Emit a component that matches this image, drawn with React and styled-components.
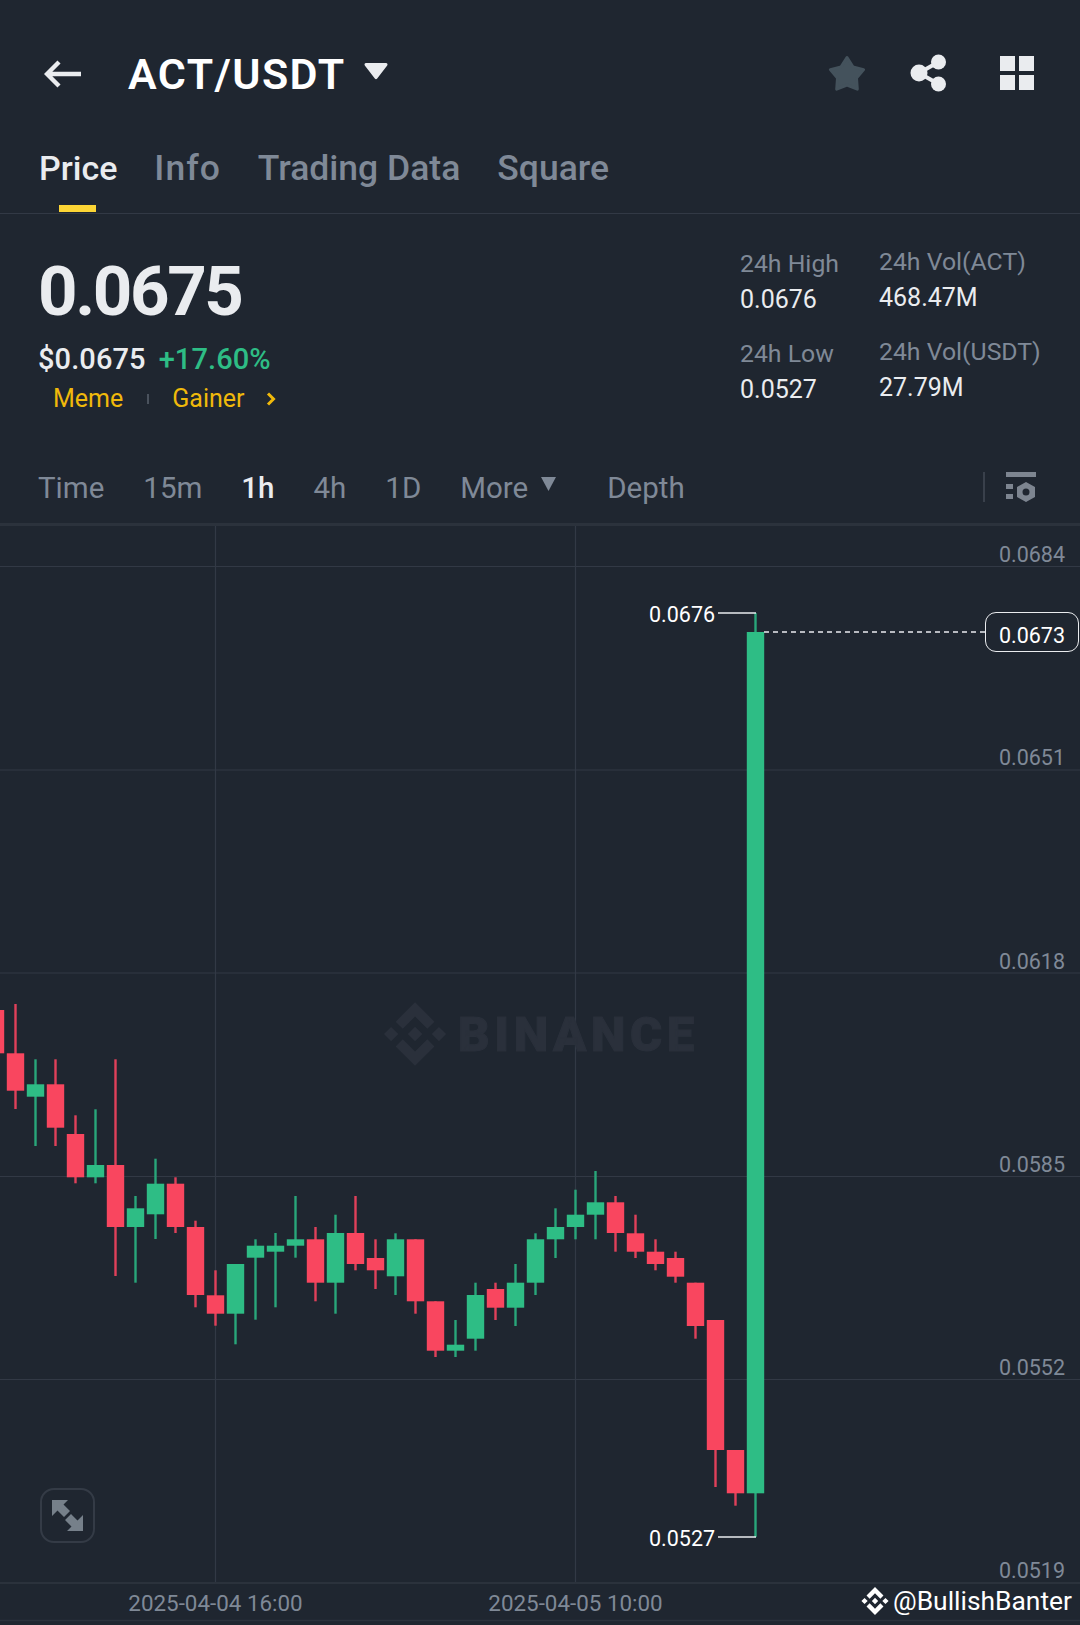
import styled, { createGlobalStyle } from 'styled-components';

const GlobalStyle = createGlobalStyle`
  html, body {
    margin: 0;
    padding: 0;
    background: #1f2630;
  }
  * {
    box-sizing: border-box;
  }
`;

const FONT = `Roboto, "Noto Sans", sans-serif`;
const GREY = '#7f8997';
const WHITE = '#eaecef';
const GREEN = '#2ebd85';
const RED = '#f9465f';
const GRID = '#323945';

const Page = styled.div`
  width: 1080px;
  height: 1625px;
  overflow: hidden;
  display: flex;
  flex-direction: column;
  background: #1f2630;
  color: ${WHITE};
  font-family: ${FONT};
`;

const TopBar = styled.header`
  height: 132px;
  padding: 16px 46px 0 44px;
  display: flex;
  align-items: center;
`;

const Title = styled.h1`
  margin: 0 0 0 47px;
  font-size: 43px;
  font-weight: 600;
  letter-spacing: 1.4px;
  color: #fff;
`;

const Caret = styled.svg`
  margin: 0 0 6px 18px;
  flex: none;
`;

const Actions = styled.div`
  margin: 0 0 2px auto;
  display: flex;
  align-items: center;
  gap: 44px;
`;

const ShareIcon = styled.svg`
  margin-right: 8px;
`;

const Tabs = styled.nav`
  height: 82px;
  padding: 0 0 10px 39px;
  display: flex;
  align-items: center;
  gap: 37px;
  border-bottom: 1px solid ${GRID};
`;

const Tab = styled.div`
  position: relative;
  font-size: ${(props) => (props.$active ? 34 : 35.5)}px;
  font-weight: 500;
  letter-spacing: ${(props) => props.$spread || 0}px;
  color: ${(props) => (props.$active ? WHITE : GREY)};

  &::after {
    content: '';
    display: ${(props) => (props.$active ? 'block' : 'none')};
    position: absolute;
    left: 20px;
    bottom: -24px;
    width: 37px;
    height: 7px;
    background: #fcd535;
  }
`;

const Summary = styled.section`
  height: 244px;
  display: flex;
  justify-content: space-between;
`;

const PriceBlock = styled.div`
  padding: 38px 0 0 38px;
`;

const BigPrice = styled.div`
  font-size: 69px;
  line-height: 80px;
  font-weight: 700;
  letter-spacing: -2.4px;
`;

const SubPrice = styled.div`
  margin-top: 10px;
  display: flex;
  gap: 13px;
  font-size: 29px;
  line-height: 34px;
  font-weight: 500;
  letter-spacing: 0.1px;
`;

const Change = styled.span`
  color: ${GREEN};
`;

const TagRow = styled.div`
  margin: 6px 0 0 15px;
  display: flex;
  align-items: center;
  font-size: 25px;
  line-height: 34px;
  color: #f0b90b;
`;

const TagDivider = styled.i`
  width: 2px;
  height: 10px;
  margin: 0 23px 0 24px;
  background: #4a525d;
`;

const TagArrow = styled.svg`
  margin-left: 21px;
`;

const Stats = styled.div`
  display: flex;
  width: 340px;
`;

const StatColumn = styled.div`
  width: ${(props) => props.$width}px;
  padding-top: ${(props) => props.$top}px;
  display: flex;
  flex-direction: column;
  gap: 23px;
`;

const Stat = styled.div`
  display: flex;
  flex-direction: column;
  gap: 5px;
`;

const StatLabel = styled.span`
  font-size: 24.8px;
  line-height: 31px;
  color: ${GREY};
`;

const StatValue = styled.span`
  font-size: 25px;
  line-height: 31px;
  color: ${WHITE};
`;

const IntervalBar = styled.div`
  height: 68px;
  padding: 0 44px 6px 38px;
  display: flex;
  align-items: center;
  gap: 39px;
  font-size: 29.5px;
  color: ${GREY};
  border-bottom: 3px solid #2b323c;
`;

const Interval = styled.span`
  color: ${(props) => (props.$active ? WHITE : GREY)};
  font-weight: ${(props) => (props.$active ? 500 : 400)};
`;

const MoreCaret = styled.svg`
  margin: 0 11px 8px -27px;
`;

const BarSide = styled.div`
  margin: 0 0 2px auto;
  display: flex;
  align-items: center;
  gap: 21px;
`;

const BarDivider = styled.i`
  width: 2px;
  height: 30px;
  background: #39404b;
`;

const ChartWrap = styled.main`
  position: relative;
  flex: 1;
`;

const ChartSvg = styled.svg`
  display: block;
  width: 1080px;
  height: 1099px;
`;

const AxisText = styled.text`
  font-family: ${FONT};
  font-size: ${(props) => props.$size || 21.5}px;
  fill: ${(props) => props.$fill || GREY};
`;

const Watermark = styled.text`
  font-family: ${FONT};
  font-size: 49px;
  font-weight: 900;
  letter-spacing: 4.6px;
  fill: #2a303b;
  stroke: #2a303b;
  stroke-width: 1px;
`;

const PriceTag = styled.div`
  position: absolute;
  left: 985px;
  top: 86px;
  width: 94px;
  height: 40px;
  padding-top: 6px;
  display: flex;
  align-items: center;
  justify-content: center;
  font-size: 21.5px;
  color: #fff;
  background: #1f2630;
  border: 1.5px solid ${WHITE};
  border-radius: 11px;
`;

const ExpandButton = styled.div`
  position: absolute;
  left: 40px;
  top: 962px;
  width: 55px;
  height: 55px;
  display: flex;
  align-items: center;
  justify-content: center;
  border: 2px solid #343b46;
  border-radius: 14px;
`;

const Credit = styled.div`
  position: absolute;
  right: 8px;
  top: 1060px;
  display: flex;
  align-items: center;
  gap: 4px;
  font-size: 26.4px;
  line-height: 30px;
  color: #fff;
`;

const BINANCE_LOGO =
  'M38.73 53.2L64 27.93l25.28 25.28 14.7-14.7L64-1.47 24.03 38.5zM0 64l14.7-14.7L29.4 64 14.7 78.7zm38.73 10.8L64 100.07l25.28-25.28 14.71 14.69L64 129.47 24.03 89.5l-.02-.02zM98.6 64l14.7-14.7L128 64l-14.7 14.7zM78.91 64L64 49.09 52.99 60.1l-1.27 1.27-2.61 2.61L64 78.91 78.91 64z';

// x, high, body top, body bottom, low, up
const CANDLES = [
  [-4.5, 1000, 1010, 1053.3, 1060, 0],
  [15.5, 1004, 1053.3, 1090.7, 1109, 0],
  [35.5, 1059.3, 1084.3, 1096.7, 1146, 1],
  [55.5, 1059.3, 1084.3, 1127.7, 1146, 0],
  [75.5, 1115.3, 1134, 1177.3, 1183.3, 0],
  [95.5, 1109.3, 1165, 1177.3, 1183.3, 1],
  [115.5, 1059.3, 1165, 1227, 1276, 0],
  [135.5, 1196, 1208.3, 1227, 1282.7, 1],
  [155.5, 1158.7, 1183.7, 1214.3, 1239, 1],
  [175.5, 1177.3, 1183.7, 1227, 1233, 0],
  [195.5, 1220.7, 1227, 1295, 1307.3, 0],
  [215.5, 1270.3, 1295.3, 1313.7, 1325.7, 0],
  [235.5, 1264, 1264, 1313.7, 1344.3, 1],
  [255.5, 1239.3, 1245.7, 1257.7, 1319.7, 1],
  [275.5, 1233, 1245.7, 1251.7, 1307.3, 1],
  [295.5, 1196, 1239.3, 1245.7, 1257.7, 1],
  [315.5, 1227, 1239.3, 1282.7, 1301.3, 0],
  [335.5, 1214.7, 1233, 1282.7, 1313.7, 1],
  [355.5, 1196, 1233, 1264, 1270.3, 0],
  [375.5, 1239.3, 1258, 1270.3, 1289, 0],
  [395.5, 1233.3, 1239.3, 1276.3, 1295, 1],
  [415.5, 1239.3, 1239.3, 1301.3, 1313.7, 0],
  [435.5, 1301.3, 1301.3, 1350.7, 1357, 0],
  [455.5, 1320, 1344.7, 1350.7, 1357, 1],
  [475.5, 1282.7, 1295, 1338.7, 1350.7, 1],
  [495.5, 1282.7, 1289, 1307.7, 1320, 0],
  [515.5, 1264, 1282.7, 1307.7, 1326, 1],
  [535.5, 1233.3, 1239.3, 1282.7, 1295, 1],
  [555.5, 1208.3, 1227, 1239.3, 1258, 1],
  [575.5, 1189.7, 1214.7, 1227, 1239.3, 1],
  [595.5, 1171, 1202.3, 1214.7, 1239.3, 1],
  [615.5, 1196, 1202.3, 1233, 1251.7, 0],
  [635.5, 1214.7, 1233.3, 1251.7, 1258, 0],
  [655.5, 1239.3, 1251.7, 1264, 1270.3, 0],
  [675.5, 1251.7, 1258, 1276.7, 1282.7, 0],
  [695.5, 1282.7, 1282.7, 1326, 1338.7, 0],
  [715.5, 1320, 1320, 1450, 1487, 0],
  [735.5, 1450, 1450, 1493.3, 1505.7, 0],
  [755.5, 613, 632, 1493.3, 1537, 1],
];

const GRID_ROWS = [566.5, 770, 973, 1176.5, 1379.5];
const PRICE_LABELS = [
  ['0.0684', 562],
  ['0.0651', 765],
  ['0.0618', 969],
  ['0.0585', 1172],
  ['0.0552', 1375],
  ['0.0519', 1578],
];

function Candle({ candle }) {
  const [x, high, top, bottom, low, up] = candle;
  const fill = up ? GREEN : RED;
  const wick = up ? '#29a67a' : '#e0405a';
  return (
    <g>
      <rect x={x - 1.2} y={high} width={2.4} height={low - high} fill={wick} />
      <rect x={x - 8.7} y={top} width={17.4} height={bottom - top} fill={fill} />
    </g>
  );
}

function Chart() {
  return (
    <ChartSvg viewBox="0 526 1080 1099">
      {GRID_ROWS.map((y) => (
        <line key={y} x1="0" x2="1080" y1={y} y2={y} stroke={GRID} strokeWidth="1.2" />
      ))}
      <line x1="215.5" x2="215.5" y1="526" y2="1583" stroke={GRID} strokeWidth="1.2" />
      <line x1="575.5" x2="575.5" y1="526" y2="1583" stroke={GRID} strokeWidth="1.2" />
      <line x1="0" x2="1080" y1="1583" y2="1583" stroke="#2b323c" strokeWidth="2" />
      <line x1="0" x2="1080" y1="1620.5" y2="1620.5" stroke="#2b323c" strokeWidth="1.5" />

      <g fill="#2a303b" transform="translate(384 1003) scale(0.485)">
        <path d={BINANCE_LOGO} />
      </g>
      <Watermark x="458" y="1051">BINANCE</Watermark>

      {CANDLES.map((candle) => (
        <Candle key={candle[0]} candle={candle} />
      ))}

      {PRICE_LABELS.map(([label, y]) => (
        <AxisText key={label} x="1065" y={y} textAnchor="end">{label}</AxisText>
      ))}
      <AxisText x="215.5" y="1611" textAnchor="middle" $size={22.4}>2025-04-04 16:00</AxisText>
      <AxisText x="575.5" y="1611" textAnchor="middle" $size={22.4}>2025-04-05 10:00</AxisText>

      <AxisText x="649" y="622" $fill="#fff">0.0676</AxisText>
      <line x1="718" x2="756" y1="613" y2="613" stroke={WHITE} strokeWidth="1.4" />
      <AxisText x="649" y="1546" $fill="#fff">0.0527</AxisText>
      <line x1="718" x2="756" y1="1537" y2="1537" stroke={WHITE} strokeWidth="1.4" />
      <line x1="764" x2="986" y1="632" y2="632" stroke={WHITE} strokeWidth="1.4" strokeDasharray="5 4" />
    </ChartSvg>
  );
}

function App() {
  return (
    <Page>
      <GlobalStyle />
      <TopBar>
        <svg width="37" height="28" viewBox="0 0 37 28" fill="none" stroke={WHITE} strokeWidth="4.4">
          <path d="M37 14H3M15 2L3 14l12 12" />
        </svg>
        <Title>ACT/USDT</Title>
        <Caret width="24" height="18" viewBox="0 0 24 18">
          <path d="M2 1h20a1.5 1.5 0 0 1 1.2 2.4l-10 13a1.5 1.5 0 0 1-2.4 0L.8 3.4A1.5 1.5 0 0 1 2 1z" fill={WHITE} />
        </Caret>
        <Actions>
          <svg width="38" height="38" viewBox="0 0 37 38">
            <path
              d="M18.5 3.5l5.9 9.4 10.7 2.7-7.1 8.5.8 11.1-10.3-4.2-10.3 4.2.8-11.1-7.1-8.5 10.7-2.7z"
              fill="#44525c"
              stroke="#44525c"
              strokeWidth="3"
              strokeLinejoin="round"
            />
          </svg>
          <ShareIcon width="38" height="38" viewBox="0 0 38 38" fill={WHITE}>
            <circle cx="9" cy="19" r="8.5" />
            <circle cx="28.5" cy="8" r="7.5" />
            <circle cx="28.5" cy="30" r="7.5" />
            <path d="M9 19L28.5 8M9 19l19.5 11" stroke={WHITE} strokeWidth="4" />
          </ShareIcon>
          <svg width="34" height="34" viewBox="0 0 34 34" fill={WHITE}>
            <rect x="0" y="0" width="15" height="15" />
            <rect x="19" y="0" width="15" height="15" />
            <rect x="0" y="19" width="15" height="15" />
            <rect x="19" y="19" width="15" height="15" />
          </svg>
        </Actions>
      </TopBar>

      <Tabs>
        <Tab $active>Price</Tab>
        <Tab $spread={1}>Info</Tab>
        <Tab>Trading Data</Tab>
        <Tab>Square</Tab>
      </Tabs>

      <Summary>
        <PriceBlock>
          <BigPrice>0.0675</BigPrice>
          <SubPrice>
            <span>$0.0675</span>
            <Change>+17.60%</Change>
          </SubPrice>
          <TagRow>
            <span>Meme</span>
            <TagDivider />
            <span>Gainer</span>
            <TagArrow width="10" height="14" viewBox="0 0 10 14" fill="none" stroke="#f0b90b" strokeWidth="3">
              <path d="M2 1.5L7.5 7 2 12.5" />
            </TagArrow>
          </TagRow>
        </PriceBlock>
        <Stats>
          <StatColumn $width={139} $top={34}>
            <Stat>
              <StatLabel>24h High</StatLabel>
              <StatValue>0.0676</StatValue>
            </Stat>
            <Stat>
              <StatLabel>24h Low</StatLabel>
              <StatValue>0.0527</StatValue>
            </Stat>
          </StatColumn>
          <StatColumn $width={201} $top={32}>
            <Stat>
              <StatLabel>24h Vol(ACT)</StatLabel>
              <StatValue>468.47M</StatValue>
            </Stat>
            <Stat>
              <StatLabel>24h Vol(USDT)</StatLabel>
              <StatValue>27.79M</StatValue>
            </Stat>
          </StatColumn>
        </Stats>
      </Summary>

      <IntervalBar>
        <span>Time</span>
        <span>15m</span>
        <Interval $active>1h</Interval>
        <span>4h</span>
        <span>1D</span>
        <span>More</span>
        <MoreCaret width="17" height="14" viewBox="0 0 17 14">
          <path d="M1 0h15l-7.5 14z" fill={GREY} />
        </MoreCaret>
        <span>Depth</span>
        <BarSide>
          <BarDivider />
          <svg width="30" height="30" viewBox="0 0 30 30" fill="#7d8590">
            <rect x="0" y="0" width="30" height="5" />
            <rect x="0" y="12" width="7" height="5" />
            <rect x="0" y="22" width="7" height="5" />
            <path
              fillRule="evenodd"
              d="M20 10l9 5v10l-9 5-9-5V15zm0 6.5a3.5 3.5 0 1 0 0 7 3.5 3.5 0 0 0 0-7z"
            />
          </svg>
        </BarSide>
      </IntervalBar>

      <ChartWrap>
        <Chart />
        <PriceTag>0.0673</PriceTag>
        <ExpandButton>
          <svg width="31" height="31" viewBox="0 0 31 31" fill="#76808a">
            <path d="M0 0h16l-4.5 4.5L18 11l-6 6-6.5-6.5L0 16z" />
            <path d="M31 31H15l4.5-4.5L13 20l6-6 6.5 6.5L31 15z" />
          </svg>
        </ExpandButton>
        <Credit>
          <svg width="28" height="28" viewBox="0 -2 128 132" fill="#fff">
            <path d={BINANCE_LOGO} />
          </svg>
          <span>@BullishBanter</span>
        </Credit>
      </ChartWrap>
    </Page>
  );
}

export default App;
